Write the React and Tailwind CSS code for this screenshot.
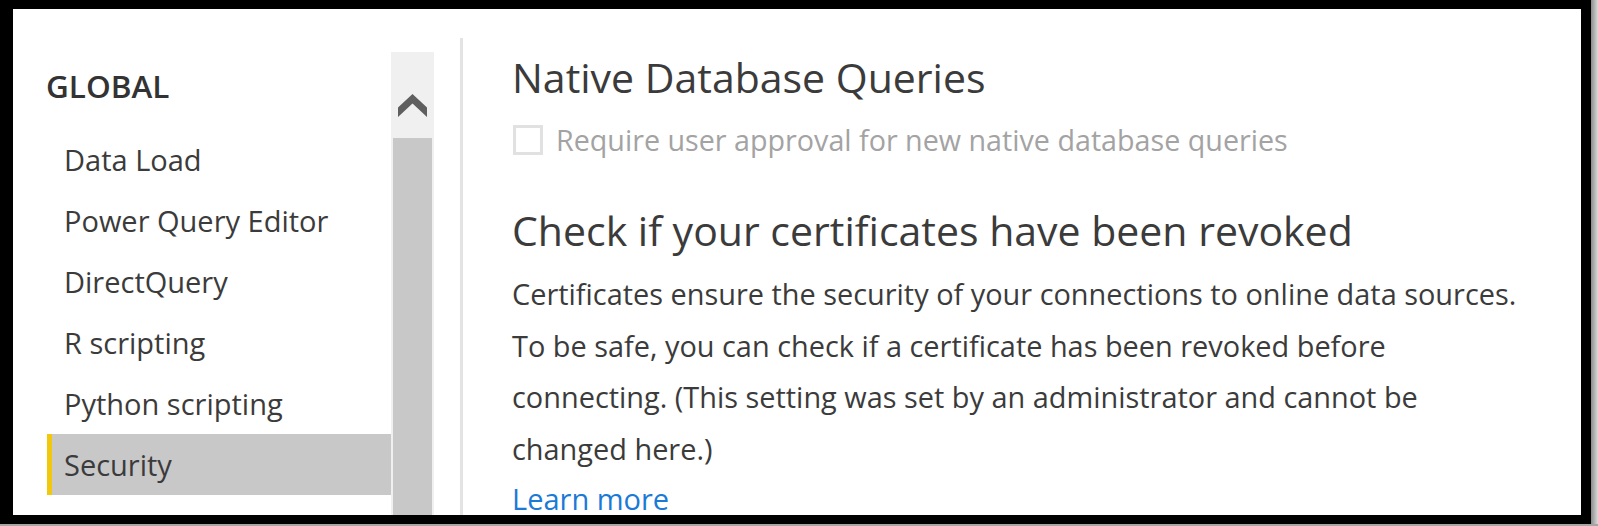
const navItems = ['Data Load', 'Power Query Editor', 'DirectQuery', 'R scripting', 'Python scripting', 'Security']

function ChevronUp() {
  return (
    <svg width="29" height="23" viewBox="0 0 29 23">
      <polygon points="0,13.5 14.5,0 29,13.5 29,23 14.5,9.5 0,23" fill="#5f5f5f" />
    </svg>
  )
}

export default function App() {
  const selected = 'Security'

  return (
    <div className="flex h-[526px] w-[1598px] flex-col bg-[#b8b8b8] font-['Open_Sans',sans-serif]">
      <div className="flex h-[524px]">
        <div className="flex h-[524px] w-[1591px] overflow-hidden border-b-[9px] border-l-[13px] border-r-[10px] border-t-[9px] border-black bg-white">
          {/* left nav */}
          <div className="flex w-[378px] shrink-0 flex-col pt-[55px]">
            <h2 className="ml-[33px] text-[31.5px] font-semibold leading-[44px] text-[#333333]">GLOBAL</h2>
            <ul className="mt-[21px]">
              {navItems.map((item) => (
                <li
                  key={item}
                  className={
                    item === selected
                      ? 'ml-[34px] h-[61px] border-l-[5px] border-[#f2c80f] bg-[#c8c8c8] pl-[12px] text-[29px] leading-[61px] text-[#3b3b3b]'
                      : 'ml-[34px] h-[61px] border-l-[5px] border-transparent pl-[12px] text-[29px] leading-[61px] text-[#3b3b3b]'
                  }
                >
                  {item}
                </li>
              ))}
            </ul>
          </div>

          {/* scrollbar */}
          <div className="mt-[43px] flex w-[43px] shrink-0 flex-col bg-[#f0f0f0]">
            <div className="flex h-[86px] justify-center pt-[42px]">
              <ChevronUp />
            </div>
            <div className="mx-[2px] flex-1 bg-[#c8c8c8]" />
          </div>

          <div className="ml-[26px] mt-[29px] w-[3px] shrink-0 bg-[#e3e3e3]" />

          {/* settings pane */}
          <div className="flex flex-col pl-[49px] pt-[40px] text-[#3b3b3b]">
            <h1 className="whitespace-nowrap text-[41px] leading-[56px]">Native Database Queries</h1>
            <label className="mt-[20px] flex h-[30px] items-center">
              <span className="ml-[1px] size-[30px] shrink-0 border-[3px] border-[#e1e1e1] bg-white" />
              <span className="ml-[13px] whitespace-nowrap text-[28.7px] leading-[30px] text-[#a3a3a3]">
                Require user approval for new native database queries
              </span>
            </label>

            <h1 className="mt-[47px] whitespace-nowrap text-[41px] leading-[56px]">
              Check if your certificates have been revoked
            </h1>
            <p className="mt-[10px] whitespace-nowrap text-[28.9px] leading-[51.5px]">
              Certificates ensure the security of your connections to online data sources.
              <br />
              To be safe, you can check if a certificate has been revoked before
              <br />
              connecting. (This setting was set by an administrator and cannot be
              <br />
              changed here.)
            </p>
            <a className="whitespace-nowrap text-[29px] leading-[49px] text-[#1a7ad6]">Learn more</a>
          </div>
        </div>
        <div className="h-full w-[7px] bg-gradient-to-r from-[#8c8c8c] to-[#dcdcdc]" />
      </div>
      <div className="h-[2px] bg-[#a6a6a6]" />
    </div>
  )
}
